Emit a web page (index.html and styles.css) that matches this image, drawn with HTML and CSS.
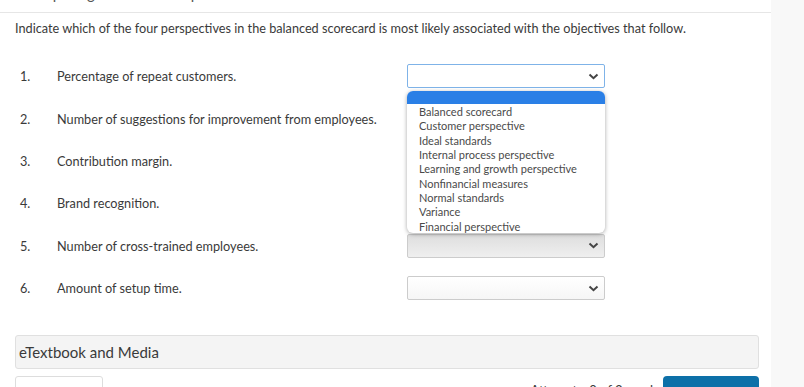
FILE: index.html
```html
<!DOCTYPE html>
<html lang="en">
<head>
	<meta charset="UTF-8">
	<title>Balanced scorecard</title>
	<link rel="stylesheet" href="styles.css">
</head>
<body>
<div class="wrap">
	<div class="main">
		<div class="head"><span class="title">Computing Balanced Perspectives</span></div>
		<p class="intro">Indicate which of the four perspectives in the balanced scorecard is most likely associated with the objectives that follow.</p>
		<ol class="items">
			<li class="item"><span class="num">1.</span><span class="txt">Percentage of repeat customers.</span>
				<div class="pick">
					<div class="sel focus"><svg class="chev" width="11" height="7" viewBox="0 0 11 7"><path d="M1.5 1.5 L5.5 5.2 L9.5 1.5" fill="none" stroke="#444" stroke-width="2"/></svg></div>
					<div class="menu">
						<div class="opt on"></div>
						<div class="opt">Balanced scorecard</div>
						<div class="opt">Customer perspective</div>
						<div class="opt">Ideal standards</div>
						<div class="opt">Internal process perspective</div>
						<div class="opt">Learning and growth perspective</div>
						<div class="opt">Nonfinancial measures</div>
						<div class="opt">Normal standards</div>
						<div class="opt">Variance</div>
						<div class="opt">Financial perspective</div>
					</div>
				</div>
			</li>
			<li class="item"><span class="num">2.</span><span class="txt">Number of suggestions for improvement from employees.</span>
				<div class="pick"><div class="sel"><svg class="chev" width="11" height="7" viewBox="0 0 11 7"><path d="M1.5 1.5 L5.5 5.2 L9.5 1.5" fill="none" stroke="#444" stroke-width="2"/></svg></div></div>
			</li>
			<li class="item"><span class="num">3.</span><span class="txt">Contribution margin.</span>
				<div class="pick"><div class="sel"><svg class="chev" width="11" height="7" viewBox="0 0 11 7"><path d="M1.5 1.5 L5.5 5.2 L9.5 1.5" fill="none" stroke="#444" stroke-width="2"/></svg></div></div>
			</li>
			<li class="item"><span class="num">4.</span><span class="txt">Brand recognition.</span>
				<div class="pick"><div class="sel"><svg class="chev" width="11" height="7" viewBox="0 0 11 7"><path d="M1.5 1.5 L5.5 5.2 L9.5 1.5" fill="none" stroke="#444" stroke-width="2"/></svg></div></div>
			</li>
			<li class="item"><span class="num">5.</span><span class="txt">Number of cross-trained employees.</span>
				<div class="pick"><div class="sel hover"><svg class="chev" width="11" height="7" viewBox="0 0 11 7"><path d="M1.5 1.5 L5.5 5.2 L9.5 1.5" fill="none" stroke="#444" stroke-width="2"/></svg></div></div>
			</li>
			<li class="item"><span class="num">6.</span><span class="txt">Amount of setup time.</span>
				<div class="pick"><div class="sel"><svg class="chev" width="11" height="7" viewBox="0 0 11 7"><path d="M1.5 1.5 L5.5 5.2 L9.5 1.5" fill="none" stroke="#444" stroke-width="2"/></svg></div></div>
			</li>
		</ol>
		<div class="media">eTextbook and Media</div>
		<div class="foot">
			<div class="btn-light"></div>
			<span class="attempts">Attempts: 0 of 3 used</span>
			<div class="btn-blue">Submit Answer</div>
		</div>
	</div>
	<div class="side"></div>
</div>
</body>
</html>
```

FILE: styles.css
```css
* {
	margin: 0;
	padding: 0;
	box-sizing: border-box;
}
body {
	font-family: Lato, "Open Sans", sans-serif;
	color: #3a3a3a;
	background: #f8f8f8;
	overflow: hidden;
	height: 387px;
}
.wrap {
	display: flex;
	height: 387px;
}
.main {
	width: 771px;
	background: #fff;
	padding-right: 12px;
}
.side {
	flex: 1;
	background: #f8f8f8;
}
.head {
	height: 13px;
	border-bottom: 1px solid #e6e6e6;
	overflow: hidden;
	margin-right: -12px;
}
.title {
	display: block;
	font-size: 15px;
	line-height: 15px;
	margin-top: -14px;
	padding-left: 22px;
	color: #555;
}
.intro {
	font-size: 12.7px;
	line-height: 16px;
	padding: 7px 0 0 15px;
	height: 42px;
}
.items {
	list-style: none;
}
.item {
	display: flex;
	align-items: center;
	height: 42.4px;
	font-size: 12.7px;
}
.num {
	width: 57px;
	padding-left: 20px;
}
.txt {
	width: 350px;
}
.pick {
	position: relative;
	width: 198px;
}
.sel {
	height: 24px;
	border: 1px solid #ccc;
	border-radius: 2px;
	background: linear-gradient(#fff, #f6f6f6);
	display: flex;
	align-items: center;
	justify-content: flex-end;
	padding-right: 5px;
}
.sel.focus {
	border-color: #7fb3e8;
	background: #fff;
}
.sel.hover {
	background: linear-gradient(#dedede, #efefef);
}
.menu {
	position: absolute;
	top: 27px;
	left: 0;
	width: 198px;
	height: 142px;
	background: #fff;
	border-radius: 6px;
	box-shadow: 0 1px 4px rgba(0, 0, 0, 0.35);
	overflow: hidden;
	z-index: 2;
	font-size: 11px;
	color: #4a4a4a;
}
.opt {
	height: 14.3px;
	line-height: 14.3px;
	padding-left: 12px;
	white-space: nowrap;
}
.opt.on {
	height: 13px;
	background: #2a7fe6;
	margin-bottom: 1px;
}
.media {
	margin: 26px 0 0 15px;
	height: 34px;
	background: #f4f4f4;
	border: 1px solid #e0e0e0;
	border-radius: 3px;
	font-size: 15px;
	line-height: 32px;
	padding-left: 3px;
}
.foot {
	display: flex;
	align-items: flex-start;
	margin: 7px 0 0 15px;
}
.btn-light {
	width: 88px;
	height: 36px;
	border: 1px solid #ddd;
	border-radius: 3px;
	background: #fff;
}
.attempts {
	margin-left: auto;
	margin-right: 10px;
	font-size: 13px;
	margin-top: 6px;
}
.btn-blue {
	width: 96px;
	height: 36px;
	background: #0d70a8;
	border-radius: 4px;
	color: #fff;
	font-size: 13px;
	text-align: center;
	line-height: 36px;
}
```
